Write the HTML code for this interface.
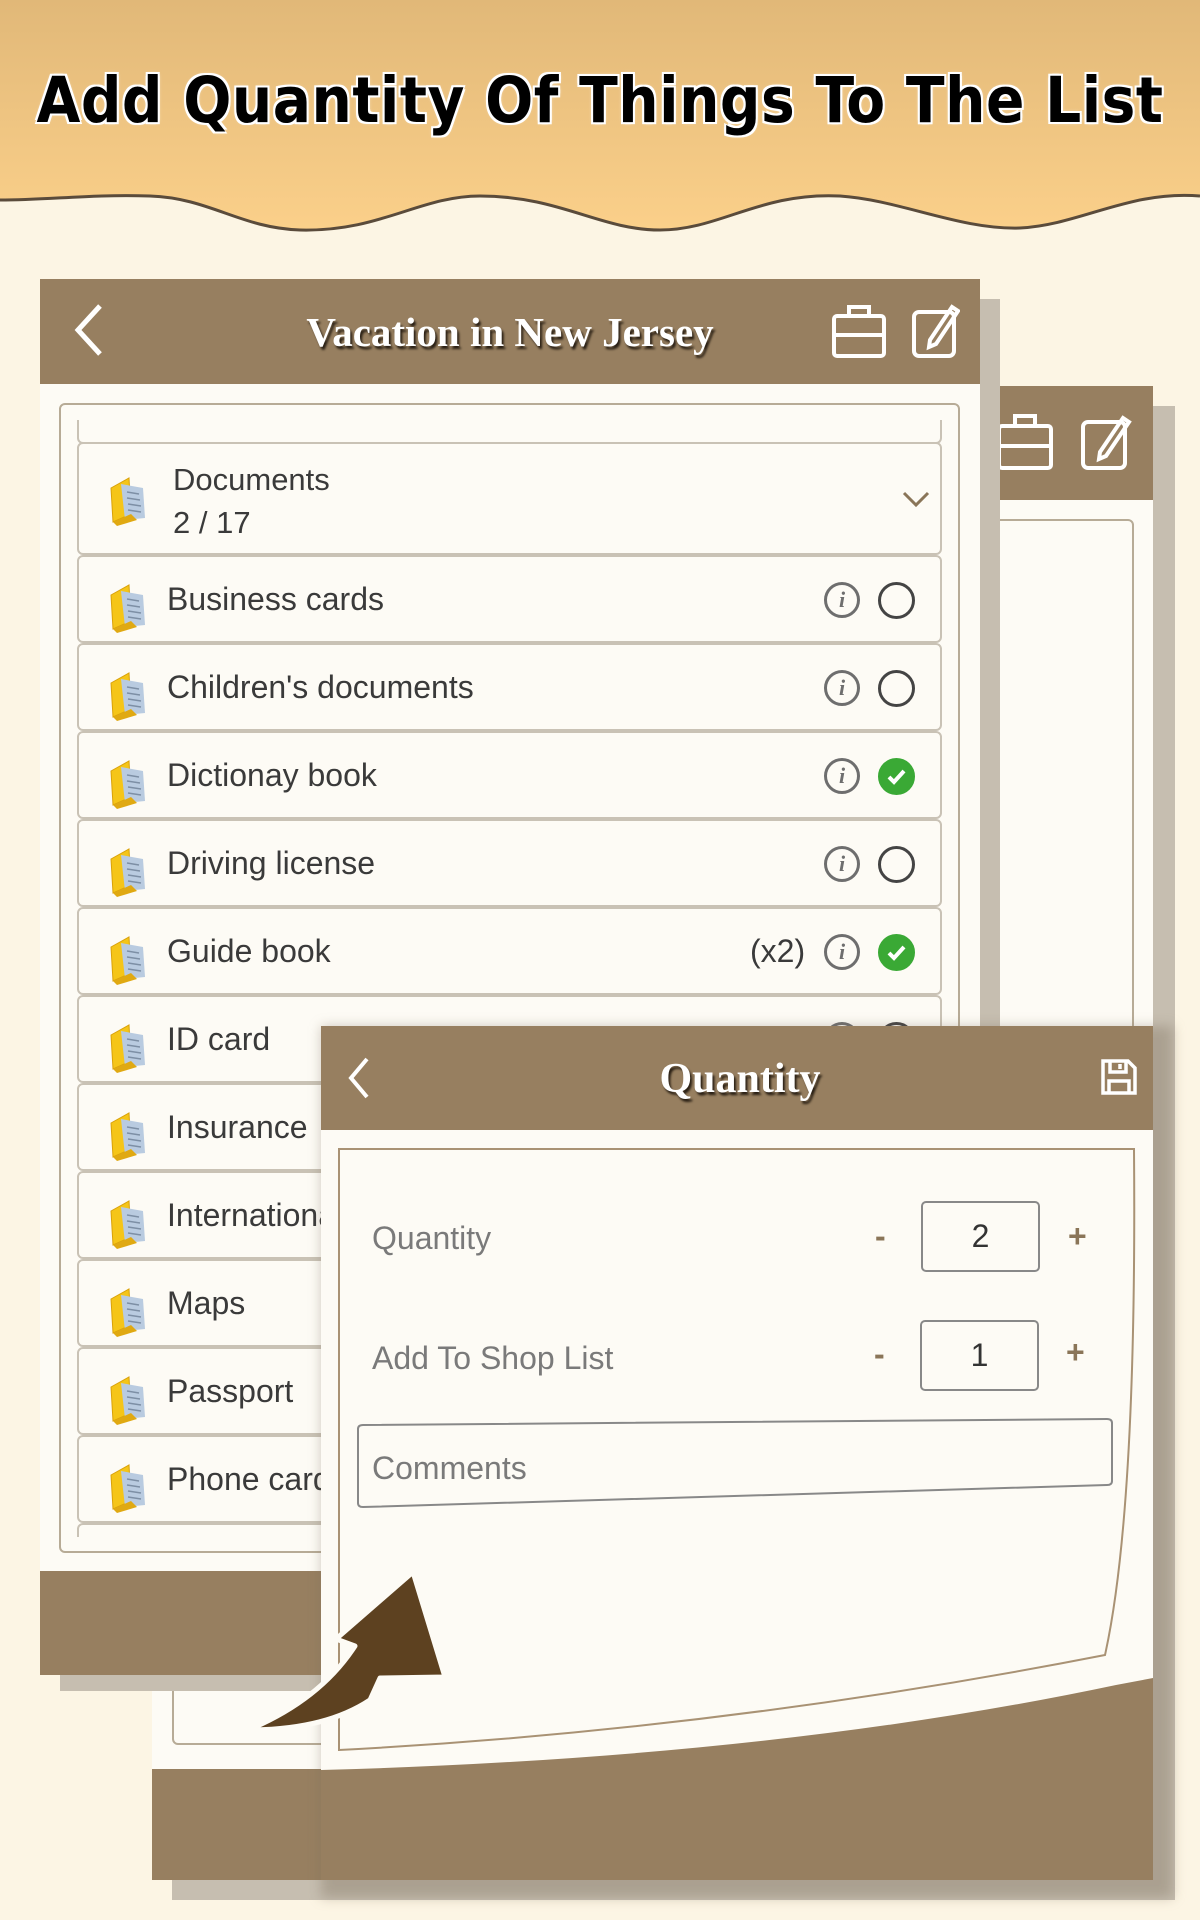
<!DOCTYPE html>
<html><head><meta charset="utf-8"><style>
*{margin:0;padding:0;box-sizing:border-box}
body{width:1200px;height:1920px;position:relative;overflow:hidden;background:#fcf5e4;font-family:"Liberation Sans",sans-serif}
.abs{position:absolute}
.hdr{background:#977f60}
.row{position:absolute;left:77px;width:865px;height:88px;background:#fdfbf5;border:2px solid #c9c2b5;border-radius:6px}
.row .t{position:absolute;left:88px;top:24px;font-size:32px;color:#3a3a3a}
.fold{position:absolute;left:28px;top:24px}
.info{position:absolute;left:745px;top:25px;width:36px;height:36px;border:3px solid #6e6e6e;border-radius:50%;font:italic bold 22px "Liberation Serif",serif;color:#6e6e6e;text-align:center;line-height:30px}
.chk{position:absolute;left:799px;top:25px;width:37px;height:37px;border:3px solid #444;border-radius:50%}
.chk.on{background:#3aa935;border-color:#3aa935}
.ttl{font-family:"Liberation Serif",serif;font-weight:bold;color:#fff;text-shadow:2px 3px 2px #2a2015}
</style></head><body>
<svg class="abs" style="left:0;top:0" width="1200" height="240">
<defs><linearGradient id="g" x1="0" y1="0" x2="0" y2="1"><stop offset="0" stop-color="#e1b878"/><stop offset="1" stop-color="#fbd08a"/></linearGradient></defs>
<path d="M0,0H1200V196C1130,190 1080,225 1020,228C960,230 900,200 840,196C760,192 720,230 660,230C600,230 560,196 480,196C420,196 380,232 300,230C240,228 210,198 150,196C90,194 50,200 0,200Z" fill="url(#g)"/>
<path d="M1200,196C1130,190 1080,225 1020,228C960,230 900,200 840,196C760,192 720,230 660,230C600,230 560,196 480,196C420,196 380,232 300,230C240,228 210,198 150,196C90,194 50,200 0,200" fill="none" stroke="#5a4b3b" stroke-width="3"/>
</svg>
<div class="abs" style="left:0;top:64px;width:1200px;text-align:center;font:bold 63px 'DejaVu Sans Condensed','DejaVu Sans',sans-serif;color:#000;text-shadow:0 0 4px #fff,2px 2px 0 #fff,-2px -2px 0 #fff,2px -2px 0 #fff,-2px 2px 0 #fff;letter-spacing:0.5px">Add Quantity Of Things To The List</div>

<div class="abs" style="left:172px;top:406px;width:1003px;height:1494px;background:#c6beb0"></div>
<div class="abs" style="left:152px;top:386px;width:1001px;height:1494px;background:#fdfbf5"></div>
<div class="abs hdr" style="left:152px;top:386px;width:1001px;height:114px"></div>
<div class="abs" style="left:172px;top:519px;width:962px;height:1226px;border:2px solid #b7ab96;border-radius:6px"></div>
<div class="abs hdr" style="left:152px;top:1769px;width:1001px;height:111px"></div>
<svg class="abs" style="left:995px;top:412px" width="140" height="60" fill="none" stroke="#fff" stroke-width="4">
<rect x="4" y="14" width="52" height="42" rx="3"/><path d="M20,14V4H40V14M4,34H56"/>
<rect x="88" y="10" width="42" height="46" rx="5"/><path d="M105,40L128,6L134,10L111,44L104,47Z"/>
</svg>

<div class="abs" style="left:60px;top:299px;width:940px;height:1392px;background:#c6beb0"></div>
<div class="abs" style="left:40px;top:279px;width:940px;height:1392px;background:#fdfbf5"></div>
<div class="abs hdr" style="left:40px;top:279px;width:940px;height:105px"></div>
<div class="abs hdr" style="left:40px;top:1571px;width:940px;height:104px"></div>
<svg class="abs" style="left:70px;top:300px" width="40" height="60" fill="none" stroke="#fff" stroke-width="5"><path d="M30,6L8,30L30,54"/></svg>
<div class="abs ttl" style="left:190px;top:308px;width:640px;text-align:center;font-size:41px">Vacation in New Jersey</div>
<svg class="abs" style="left:830px;top:302px" width="130" height="60" fill="none" stroke="#fff" stroke-width="4">
<rect x="4" y="14" width="50" height="40" rx="3"/><path d="M19,14V5H39V14M4,33H54"/>
<rect x="84" y="10" width="40" height="44" rx="5"/><path d="M100,38L122,5L128,9L106,42L99,45Z"/>
</svg>
<div class="abs" style="left:59px;top:403px;width:901px;height:1150px;border:2px solid #b7ab96;border-radius:6px"></div>
<svg width="0" height="0" style="position:absolute"><defs>
<g id="f"><path d="M4,14L22,4L24,40L6,48Z" fill="#f5c518"/><path d="M4,14L22,4L24,40L6,48Z" fill="none" stroke="#d9a10a" stroke-width="1"/><path d="M14,10L36,14L38,44L18,46Z" fill="#b9cbe0"/><path d="M20,18L32,20M20,24L33,26M21,30L34,32M21,36L34,38" stroke="#7d8fa5" stroke-width="1.5"/><path d="M6,48L24,40L30,46L10,52Z" fill="#e0a912"/></g>
</defs></svg>
<div class="row" style="top:420px;height:24px;border-top:none;border-radius:0 0 6px 6px"></div>
<div class="row" style="top:442px;height:113px"><svg class="fold" style="top:30px" width="40" height="54"><use href="#f"/></svg><div class="t" style="left:94px;top:18px;font-size:31px">Documents</div><div class="t" style="left:94px;top:61px;font-size:31px">2 / 17</div><svg class="abs" style="left:822px;top:46px" width="30" height="20" fill="none" stroke="#8a7558" stroke-width="3"><path d="M3,3L15,15L27,3"/></svg></div>
<div class="row" style="top:555px"><svg class="fold" width="40" height="54"><use href="#f"/></svg><div class="t">Business cards</div><div class="info">i</div><div class="chk"></div></div>
<div class="row" style="top:643px"><svg class="fold" width="40" height="54"><use href="#f"/></svg><div class="t">Children's documents</div><div class="info">i</div><div class="chk"></div></div>
<div class="row" style="top:731px"><svg class="fold" width="40" height="54"><use href="#f"/></svg><div class="t">Dictionay book</div><div class="info">i</div><div class="chk on"><svg width="31" height="31"><path d="M8,16L13,21L23,10" fill="none" stroke="#fff" stroke-width="4"/></svg></div></div>
<div class="row" style="top:819px"><svg class="fold" width="40" height="54"><use href="#f"/></svg><div class="t">Driving license</div><div class="info">i</div><div class="chk"></div></div>
<div class="row" style="top:907px"><svg class="fold" width="40" height="54"><use href="#f"/></svg><div class="t">Guide book</div><div class="t" style="left:671px">(x2)</div><div class="info">i</div><div class="chk on"><svg width="31" height="31"><path d="M8,16L13,21L23,10" fill="none" stroke="#fff" stroke-width="4"/></svg></div></div>
<div class="row" style="top:995px"><svg class="fold" width="40" height="54"><use href="#f"/></svg><div class="t">ID card</div><div class="info">i</div><div class="chk"></div></div>
<div class="row" style="top:1083px"><svg class="fold" width="40" height="54"><use href="#f"/></svg><div class="t">Insurance</div></div>
<div class="row" style="top:1171px"><svg class="fold" width="40" height="54"><use href="#f"/></svg><div class="t">International</div></div>
<div class="row" style="top:1259px"><svg class="fold" width="40" height="54"><use href="#f"/></svg><div class="t">Maps</div></div>
<div class="row" style="top:1347px"><svg class="fold" width="40" height="54"><use href="#f"/></svg><div class="t">Passport</div></div>
<div class="row" style="top:1435px"><svg class="fold" width="40" height="54"><use href="#f"/></svg><div class="t">Phone card</div></div>
<div class="row" style="top:1523px;height:14px;border-bottom:none;border-radius:6px 6px 0 0"></div>

<div class="abs" style="left:321px;top:1026px;width:852px;height:872px;background:rgba(120,105,85,.35);filter:blur(6px)"></div>
<div class="abs" style="left:321px;top:1026px;width:832px;height:854px;background:#fdfbf5"></div>
<div class="abs hdr" style="left:321px;top:1026px;width:832px;height:104px"></div>
<svg class="abs" style="left:345px;top:1055px" width="30" height="46" fill="none" stroke="#fff" stroke-width="4"><path d="M22,4L6,23L22,42"/></svg>
<div class="abs ttl" style="left:540px;top:1055px;width:400px;text-align:center;font-size:42px">Quantity</div>
<svg class="abs" style="left:1100px;top:1058px" width="38" height="38" fill="none" stroke="#fff" stroke-width="3.5"><path d="M3,3H28L35,10V35H3Z"/><path d="M10,3V14H26V3M20,6V11M9,35V23H29V35"/></svg>
<svg class="abs" style="left:321px;top:1130px" width="832" height="750">
<path d="M0,640Q450,628 795,555L832,548V750H0Z" fill="#977f60"/>
<path d="M18,19H813Q816,380 784,525Q400,600 18,620Z" fill="#fdfbf5" stroke="#a99274" stroke-width="2"/>
</svg>
<div class="abs" style="left:372px;top:1220px;font-size:32px;color:#7a7a7a">Quantity</div>
<div class="abs" style="left:875px;top:1218px;font-size:32px;color:#8a7558;font-weight:bold">-</div>
<div class="abs" style="left:921px;top:1201px;width:119px;height:71px;border:2px solid #888;border-radius:5px;font-size:32px;color:#333;text-align:center;line-height:67px">2</div>
<div class="abs" style="left:1068px;top:1218px;font-size:32px;color:#8a7558;font-weight:bold">+</div>
<div class="abs" style="left:372px;top:1340px;font-size:32px;color:#7a7a7a">Add To Shop List</div>
<div class="abs" style="left:874px;top:1336px;font-size:32px;color:#8a7558;font-weight:bold">-</div>
<div class="abs" style="left:920px;top:1320px;width:119px;height:71px;border:2px solid #888;border-radius:5px;font-size:32px;color:#333;text-align:center;line-height:67px">1</div>
<div class="abs" style="left:1066px;top:1334px;font-size:32px;color:#8a7558;font-weight:bold">+</div>
<svg class="abs" style="left:355px;top:1415px" width="760" height="95"><path d="M3,14Q3,10 8,10L752,4Q757,4 757,8V66Q757,70 752,70L8,92Q3,92 3,88Z" fill="none" stroke="#888" stroke-width="2"/></svg>
<div class="abs" style="left:372px;top:1450px;font-size:32px;color:#7a7a7a">Comments</div>
<svg class="abs" style="left:230px;top:1550px" width="240" height="200">
<path d="M18,180Q95,180 140,150L150,128L215,127L183,22L106,89L125,96Q90,150 18,180Z" fill="#5d4120" stroke="#fdfbf5" stroke-width="5" stroke-linejoin="round"/>
</svg>
</body></html>
